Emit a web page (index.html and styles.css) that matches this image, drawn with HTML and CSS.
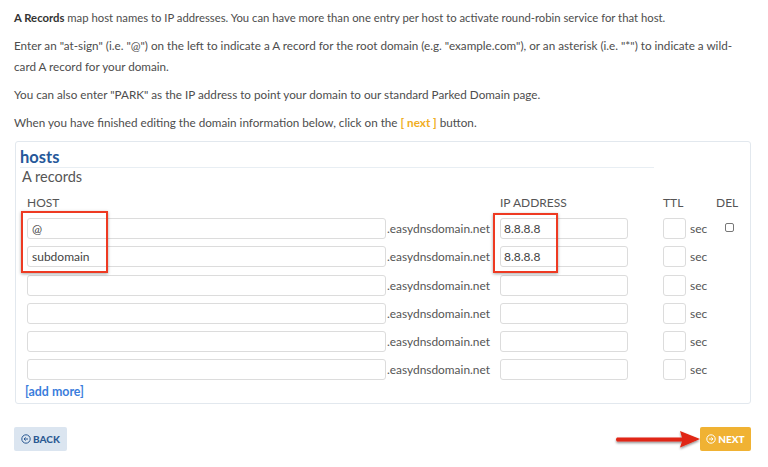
FILE: index.html
```html
<!DOCTYPE html>
<html>
<head>
<meta charset="utf-8">
<link rel="stylesheet" href="styles.css">
</head>
<body>
<div class="page">
  <p class="first"><b>A Records</b> map host names to IP addresses. You can have more than one entry per host to activate round-robin service for that host.</p>
  <p>Enter an "at-sign" (i.e. "@") on the left to indicate a A record for the root domain (e.g. "example.com"), or an asterisk (i.e. "*") to indicate a wild-<br>card A record for your domain.</p>
  <p>You can also enter "PARK" as the IP address to point your domain to our standard Parked Domain page.</p>
  <p>When you have finished editing the domain information below, click on the <span class="nextref">[ next ]</span> button.</p>

  <div class="panel">
    <div class="title">hosts</div>
    <div class="subtitle">A records</div>
    <div class="grid">
      <div class="hd">HOST</div><div class="hd"></div><div class="hd">IP ADDRESS</div><div class="hd">TTL</div><div class="hd">DEL</div>

      <div class="inp host">@</div><div class="suffix">.easydnsdomain.net</div><div class="inp ip">8.8.8.8</div><div class="ttlc"><div class="inp ttl"></div><span class="sec">sec</span></div><div class="delc"><span class="chk"></span></div>
      <div class="inp host">subdomain</div><div class="suffix">.easydnsdomain.net</div><div class="inp ip">8.8.8.8</div><div class="ttlc"><div class="inp ttl"></div><span class="sec">sec</span></div><div class="delc"></div>
      <div class="inp host"></div><div class="suffix">.easydnsdomain.net</div><div class="inp ip"></div><div class="ttlc"><div class="inp ttl"></div><span class="sec">sec</span></div><div class="delc"></div>
      <div class="inp host"></div><div class="suffix">.easydnsdomain.net</div><div class="inp ip"></div><div class="ttlc"><div class="inp ttl"></div><span class="sec">sec</span></div><div class="delc"></div>
      <div class="inp host"></div><div class="suffix">.easydnsdomain.net</div><div class="inp ip"></div><div class="ttlc"><div class="inp ttl"></div><span class="sec">sec</span></div><div class="delc"></div>
      <div class="inp host"></div><div class="suffix">.easydnsdomain.net</div><div class="inp ip"></div><div class="ttlc"><div class="inp ttl"></div><span class="sec">sec</span></div><div class="delc"></div>
    </div>
    <div class="addmore">[add more]</div>
    <div class="hl hl-host"></div>
    <div class="hl hl-ip"></div>
  </div>

  <div class="footer">
    <div class="btn back"><svg width="10" height="10" viewBox="0 0 10 10"><circle cx="5" cy="5" r="4.2" fill="none" stroke="currentColor" stroke-width="1"/><path d="M7 5H3M4.6 3.4L3 5l1.6 1.6" fill="none" stroke="currentColor" stroke-width="1"/></svg>BACK</div>
    <div class="nextwrap">
      <svg class="arrow" width="92" height="26" viewBox="0 0 92 26">
        <defs><filter id="sh" x="-10%" y="-40%" width="120%" height="180%"><feDropShadow dx="0" dy="1.5" stdDeviation="1.2" flood-color="#000" flood-opacity="0.45"/></filter></defs>
        <path d="M3 10.5 L68 10.5 L66 4 L86 12 L66 20.5 L68 14.5 L3 14.5 Q1 12.5 3 10.5 Z" fill="#e02612" filter="url(#sh)"/>
      </svg>
      <div class="btn next"><svg width="10" height="10" viewBox="0 0 10 10"><circle cx="5" cy="5" r="4.2" fill="none" stroke="currentColor" stroke-width="1"/><path d="M3 5h4M5.4 3.4L7 5 5.4 6.6" fill="none" stroke="currentColor" stroke-width="1"/></svg>NEXT</div>
    </div>
  </div>
</div>
</body>
</html>
```
FILE: styles.css
```css
html, body {
  margin: 0;
  padding: 0;
  background: #fff;
}
body {
  font-family: Lato, "Open Sans", sans-serif;
  color: #4d4d4d;
  font-size: 12px;
}
.page {
  padding: 7px 17px 0 14px;
}
p {
  margin: 0 0 7px 0;
  line-height: 21px;
  font-size: 11.7px;
  margin-right: -14px;
}
p.first {
  font-size: 11.3px;
}
p b {
  color: #333;
}
.nextref {
  color: #f0ad22;
  font-weight: bold;
}
.panel {
  position: relative;
  margin: 8px 0 0 1px;
  border: 1px solid #e2e8ee;
  border-radius: 3px;
  height: 263px;
  box-sizing: border-box;
  padding: 6px 0 0 4px;
}
.title {
  width: 634px;
  font-size: 16.5px;
  font-weight: bold;
  color: #25589a;
  line-height: 19px;
  border-bottom: 1px solid #e8eef3;
}
.subtitle {
  margin-left: 2px;
  font-size: 14.5px;
  color: #555;
  line-height: 18px;
}
.grid {
  display: grid;
  grid-template-columns: 360px 113px 163px 53px 30px;
  row-gap: 7.3px;
  margin: 10px 0 0 7px;
  align-items: center;
}
.hd {
  font-size: 12px;
  color: #555;
  line-height: 14px;
  margin-bottom: 0.7px;
}
.inp {
  box-sizing: border-box;
  height: 21px;
  border: 1px solid #dcdcdc;
  border-radius: 3px;
  background: #fff;
  font-size: 12px;
  line-height: 19px;
  padding-left: 4px;
  color: #444;
}
.host { width: 359px; }
.ip { width: 128px; padding-left: 3px; }
.suffix {
  font-size: 11.9px;
  color: #555;
  white-space: nowrap;
}
.ttlc {
  display: flex;
  align-items: center;
}
.ttl {
  width: 23px;
}
.sec {
  margin-left: 4px;
  font-size: 12px;
  color: #555;
}
.delc {
  display: flex;
  padding-left: 9px;
  align-items: center;
}
.chk {
  display: block;
  width: 7px;
  height: 7px;
  border: 1px solid #777;
  border-radius: 2px;
  margin-top: -2px;
}
.addmore {
  margin: 5px 0 0 5px;
  font-size: 12.4px;
  font-weight: bold;
  color: #3a7ddc;
  line-height: 14px;
}
.hl {
  position: absolute;
  border: 2.5px solid #ee3a22;
  box-shadow: 0 1px 3px rgba(0,0,0,0.35);
  box-sizing: border-box;
}
.hl-host {
  left: 5px;
  top: 69px;
  width: 87px;
  height: 62px;
}
.hl-ip {
  left: 477px;
  top: 71px;
  width: 65px;
  height: 60px;
}
.footer {
  display: flex;
  justify-content: space-between;
  align-items: center;
  margin-top: 23px;
}
.btn {
  display: flex;
  align-items: center;
  justify-content: center;
  gap: 2px;
  height: 24px;
  border-radius: 2px;
  font-size: 10px;
  font-weight: 900;
  box-sizing: border-box;
}
.back {
  width: 53px;
  background: #dbe5f0;
  color: #2c5a93;
}
.next {
  width: 51px;
  background: #f0b233;
  color: #fff;
}
.nextwrap {
  display: flex;
  align-items: center;
  position: relative;
}
.arrow {
  position: absolute;
  right: 45px;
  top: 0;
}
```
